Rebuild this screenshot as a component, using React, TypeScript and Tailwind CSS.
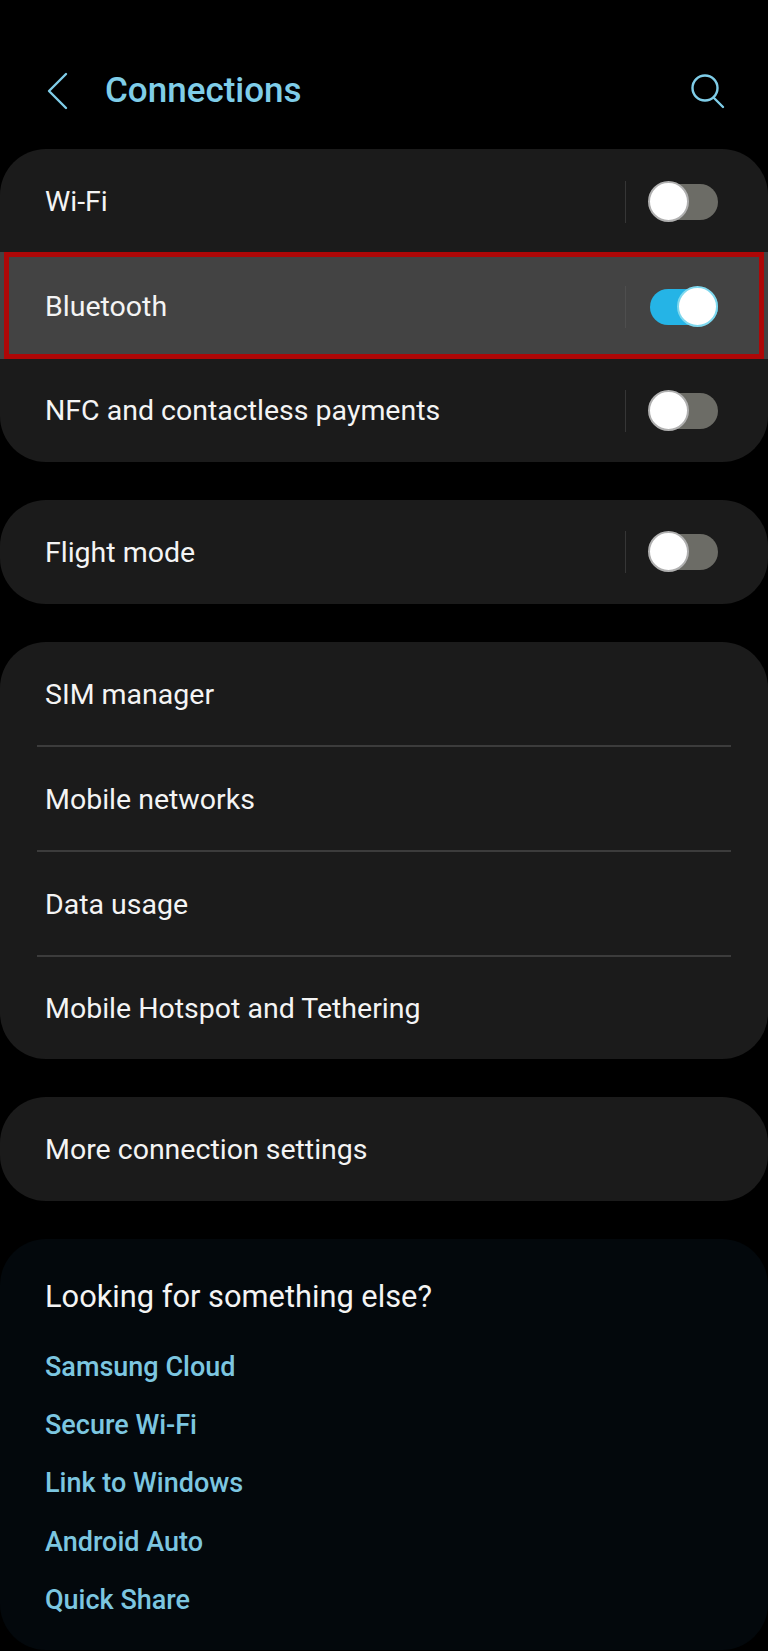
const font = { fontFamily: "Roboto, 'Noto Sans', sans-serif" };

function Toggle({ on }: { on?: boolean }) {
  return (
    <div className="flex items-center h-full">
      <div className={`w-px h-[42px] ${on ? "bg-[#4e4e4e]" : "bg-[#363636]"}`} />
      <div className="ml-[24px] mr-[50px] relative w-[68px] h-[36px]">
        <div className={`absolute inset-0 rounded-full ${on ? "bg-[#25b4e6]" : "bg-[#6c6c66]"}`} />
        <div className={`absolute top-[-3px] w-[41px] h-[41px] rounded-full bg-white border-2 ${on ? "right-0 border-[#7fd8ee]" : "left-[-2px] border-[#b0b0b0]"}`} />
      </div>
    </div>
  );
}

function Row({ label, toggle, on, divider, h = "h-[105px]" }: { label: string; toggle?: boolean; on?: boolean; divider?: boolean; h?: string }) {
  return (
    <div className={`relative ${h} flex items-center justify-between`}>
      <span className="pl-[45px] pt-[2px] text-[28.5px] text-[#f4f4f4] leading-none">{label}</span>
      {toggle && <Toggle on={on} />}
      {divider && <div className="absolute left-[37px] right-[37px] bottom-0 h-[2px] bg-[#3c3c3c]" />}
    </div>
  );
}

function HighlightRow({ label }: { label: string }) {
  return (
    <div className="relative h-[105px] flex items-center justify-between">
      <div className="absolute inset-x-0 top-[-2px] bottom-0 bg-[#434343]">
        <div className="absolute left-[4px] right-[4px] top-0 bottom-0 border-[5px] border-[#ae0707]" />
      </div>
      <span className="relative pl-[45px] pt-[2px] text-[28.5px] text-[#f4f4f4] leading-none">{label}</span>
      <div className="relative h-full"><Toggle on /></div>
    </div>
  );
}

function Card({ children }: { children: React.ReactNode }) {
  return <div className="bg-[#1b1b1b] rounded-[46px] overflow-hidden">{children}</div>;
}

export default function App() {
  return (
    <div className="w-[768px] h-[1651px] bg-black overflow-hidden" style={font}>
      <header className="h-[149px] flex items-center justify-between pt-[32px]">
        <div className="flex items-center">
          <svg className="ml-[46px]" width="24" height="38" viewBox="0 0 24 38" fill="none" stroke="#7fcde8" strokeWidth="2.4" strokeLinecap="round" strokeLinejoin="round">
            <path d="M20 2 L3 19 L20 36" />
          </svg>
          <h1 className="ml-[35px] text-[35px] font-medium text-[#7fcde8] leading-none">Connections</h1>
        </div>
        <svg className="mr-[42px]" width="36" height="36" viewBox="0 0 36 36" fill="none" stroke="#7fcde8" strokeWidth="2.4" strokeLinecap="round">
          <circle cx="15" cy="15" r="12.5" />
          <path d="M24 25 L33 34" />
        </svg>
      </header>
      <div className="flex flex-col gap-[38px]">
        <Card>
          <Row label="Wi-Fi" toggle />
          <HighlightRow label="Bluetooth" />
          <Row label="NFC and contactless payments" toggle h="h-[103px]" />
        </Card>
        <Card>
          <Row label="Flight mode" toggle h="h-[104px]" />
        </Card>
        <Card>
          <Row label="SIM manager" divider />
          <Row label="Mobile networks" divider />
          <Row label="Data usage" divider />
          <Row label="Mobile Hotspot and Tethering" h="h-[102px]" />
        </Card>
        <Card>
          <Row label="More connection settings" h="h-[104px]" />
        </Card>
        <section className="bg-[#03080c] rounded-[46px] h-[411px] pl-[45px] pt-[41px]">
          <h2 className="text-[30.8px] text-[#f4f4f4] leading-[34px]">Looking for something else?</h2>
          <ul className="mt-[38px] flex flex-col gap-[28.2px] text-[27px] font-medium text-[#7cc6e0] leading-[30px]">
            <li>Samsung Cloud</li>
            <li>Secure Wi-Fi</li>
            <li>Link to Windows</li>
            <li>Android Auto</li>
            <li>Quick Share</li>
          </ul>
        </section>
      </div>
    </div>
  );
}
